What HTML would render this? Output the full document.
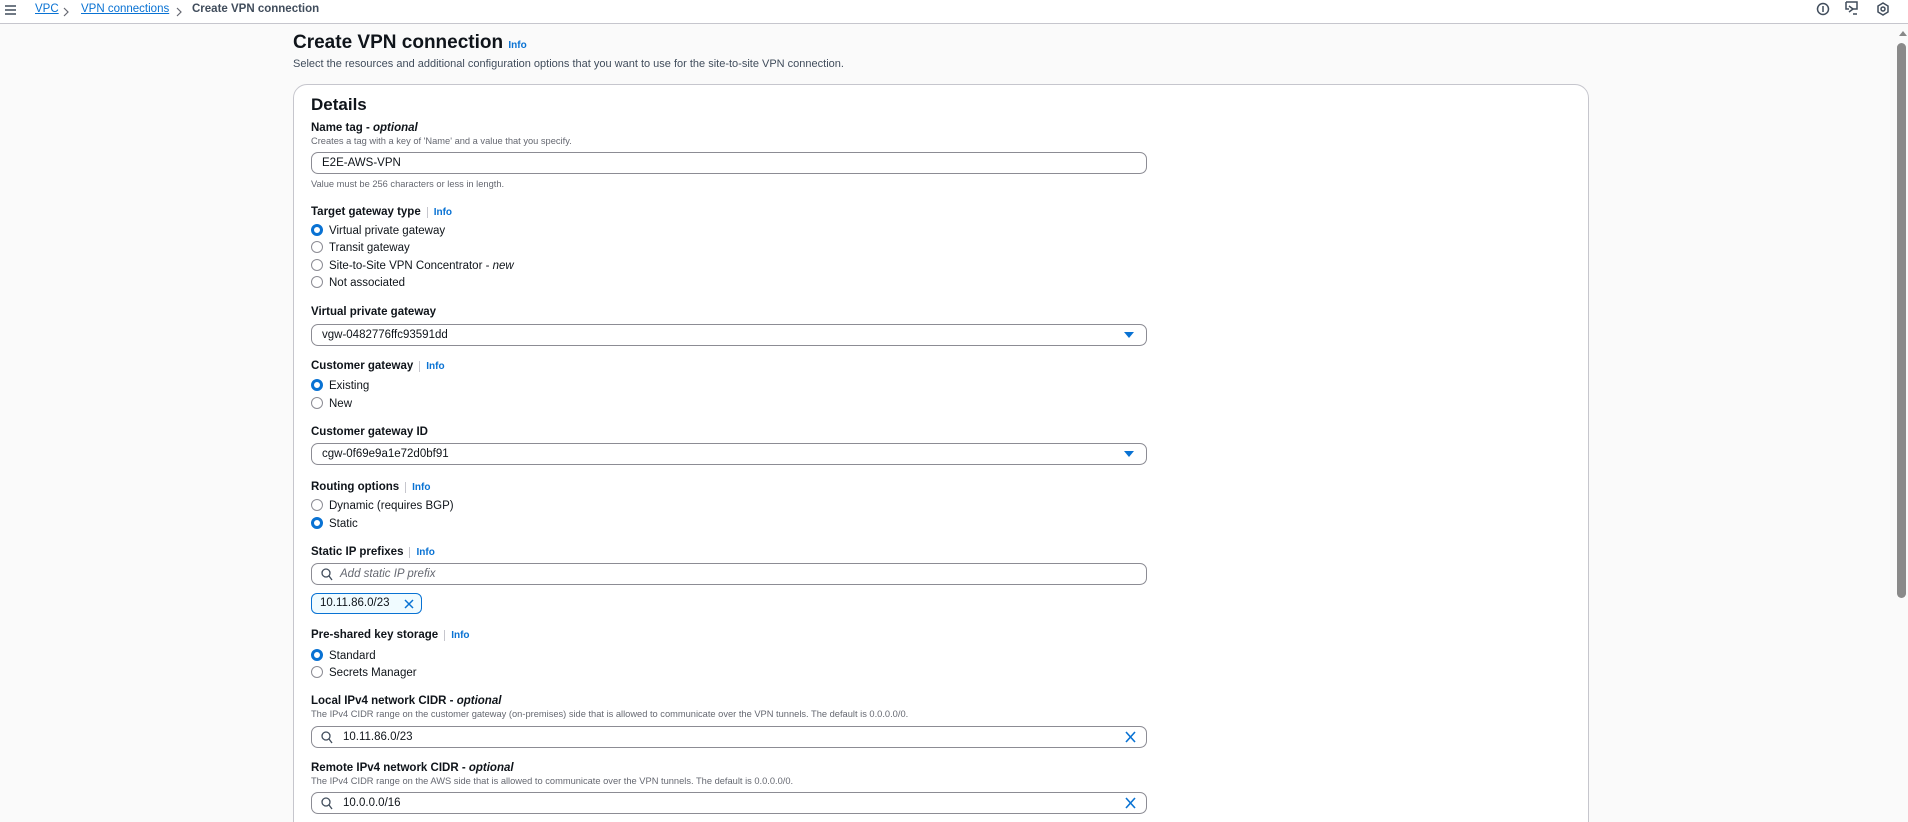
<!DOCTYPE html>
<html><head><meta charset="utf-8"><style>
*{box-sizing:border-box;margin:0;padding:0}
html,body{width:1908px;height:822px;overflow:hidden}
body{background:#fafafa;font-family:"Liberation Sans",sans-serif;color:#0f141a;position:relative}
.hdr{position:absolute;left:0;top:0;width:1908px;height:24px;background:#fff;border-bottom:1px solid #c6c6cd;font-size:11.5px}
.abs{position:absolute}
a{color:#0972d3;text-decoration:underline}
.card{position:absolute;left:293px;top:84px;width:1296px;height:760px;background:#fff;border:1px solid #c6c6cd;border-radius:14px}
.lbl{position:absolute;left:17px;font-size:11.5px;font-weight:bold;white-space:nowrap}
.lbl .info{color:#0972d3;font-size:10px;margin-left:6px;padding-left:6px;border-left:1px solid #c6c6cd;font-weight:bold}
.desc{position:absolute;left:17px;font-size:9.3px;color:#656871;white-space:nowrap}
.inp{position:absolute;left:17px;width:836px;height:22px;border:1px solid #8c8c94;border-radius:7px;font-size:11.5px;padding-left:10px;line-height:20px;background:#fff}
.r{position:absolute;left:17px;font-size:11.5px;white-space:nowrap;line-height:14px}
.r i{display:inline-block;width:12px;height:12px;border-radius:50%;border:1px solid #8c8c94;vertical-align:-2px;margin-right:6px}
.r i.on{border:3.5px solid #0972d3}
.caret{position:absolute;right:12px;top:7px;width:0;height:0;border-left:5px solid transparent;border-right:5px solid transparent;border-top:6px solid #0972d3}
.srch{position:absolute;left:9px;top:4px}
.x{position:absolute;right:10px;top:4px}
</style></head><body>
<div class="hdr">
<svg class="abs" style="left:5px;top:4px" width="12" height="12" viewBox="0 0 12 12"><path d="M0 2h11M0 6h11M0 10h11" stroke="#414d5c" stroke-width="1.5"/></svg>
<a class="abs" style="left:35px;top:3px">VPC</a>
<svg class="abs" style="left:63px;top:7px" width="6" height="10" viewBox="0 0 6 10"><path d="M1 1l4 4-4 4" fill="none" stroke="#656871" stroke-width="1.2"/></svg>
<a class="abs" style="left:81px;top:3px">VPN connections</a>
<svg class="abs" style="left:176px;top:7px" width="6" height="10" viewBox="0 0 6 10"><path d="M1 1l4 4-4 4" fill="none" stroke="#656871" stroke-width="1.2"/></svg>
<span class="abs" style="left:192px;top:3px;color:#414d5c;font-weight:bold">Create VPN connection</span>
<svg class="abs" style="left:1816px;top:2px" width="14" height="14" viewBox="0 0 14 14"><circle cx="7" cy="7" r="5.5" fill="none" stroke="#414d5c" stroke-width="1.5"/><path d="M7 4v6" stroke="#414d5c" stroke-width="1.5"/></svg>
<svg class="abs" style="left:1845px;top:1px" width="15" height="15" viewBox="0 0 15 15"><path d="M1 1h11v7H8M1 1v7h3" fill="none" stroke="#414d5c" stroke-width="1.5"/><path d="M4 5l4 3-4 3M8 13h4" fill="none" stroke="#414d5c" stroke-width="1.5"/></svg>
<svg class="abs" style="left:1876px;top:2px" width="14" height="14" viewBox="0 0 14 14"><path d="M7 1l5 3v6l-5 3-5-3V4z" fill="none" stroke="#414d5c" stroke-width="1.5"/><circle cx="7" cy="7" r="2" fill="none" stroke="#414d5c" stroke-width="1.5"/></svg>
</div>
<div class="abs" style="left:1899px;top:31px;width:0;height:0;border-left:4px solid transparent;border-right:4px solid transparent;border-bottom:5px solid #888"></div>
<div class="abs" style="left:1897px;top:43px;width:9px;height:555px;background:#8a8a8a;border-radius:5px"></div>
<div class="abs" style="left:293px;top:32px;font-size:19px;font-weight:bold">Create VPN connection <span style="font-size:10px;color:#0972d3">Info</span></div>
<div class="abs" style="left:293px;top:58px;font-size:11px;color:#414d5c">Select the resources and additional configuration options that you want to use for the site-to-site VPN connection.</div>
<div class="card">
<div class="abs" style="left:17px;top:10px;font-size:17px;font-weight:bold">Details</div>
<div class="lbl" style="top:37px">Name tag - <i>optional</i></div>
<div class="desc" style="top:51px">Creates a tag with a key of 'Name' and a value that you specify.</div>
<div class="inp" style="top:67px">E2E-AWS-VPN</div>
<div class="desc" style="top:94px">Value must be 256 characters or less in length.</div>
<div class="lbl" style="top:121px">Target gateway type<span class="info">Info</span></div>
<div class="r" style="top:139px"><i class="on"></i>Virtual private gateway</div>
<div class="r" style="top:156px"><i></i>Transit gateway</div>
<div class="r" style="top:174px"><i></i>Site-to-Site VPN Concentrator - <em>new</em></div>
<div class="r" style="top:191px"><i></i>Not associated</div>
<div class="lbl" style="top:221px">Virtual private gateway</div>
<div class="inp" style="top:239px">vgw-0482776ffc93591dd<div class="caret"></div></div>
<div class="lbl" style="top:275px">Customer gateway<span class="info">Info</span></div>
<div class="r" style="top:294px"><i class="on"></i>Existing</div>
<div class="r" style="top:312px"><i></i>New</div>
<div class="lbl" style="top:341px">Customer gateway ID</div>
<div class="inp" style="top:358px">cgw-0f69e9a1e72d0bf91<div class="caret"></div></div>
<div class="lbl" style="top:396px">Routing options<span class="info">Info</span></div>
<div class="r" style="top:414px"><i></i>Dynamic (requires BGP)</div>
<div class="r" style="top:432px"><i class="on"></i>Static</div>
<div class="lbl" style="top:461px">Static IP prefixes<span class="info">Info</span></div>
<div class="inp" style="top:478px;padding-left:28px;color:#656871;font-style:italic"><svg class="srch" width="12" height="13" viewBox="0 0 12 13"><circle cx="5" cy="5" r="4" fill="none" stroke="#414d5c" stroke-width="1.3"/><path d="M8 8l3 4" stroke="#414d5c" stroke-width="1.3"/></svg>Add static IP prefix</div>
<div class="abs" style="left:17px;top:508px;width:111px;height:21px;border:1px solid #0972d3;background:#f0fbff;border-radius:6px;font-size:11.5px;padding-left:8px;line-height:19px">10.11.86.0/23<svg style="position:absolute;right:7px;top:5px" width="10" height="10" viewBox="0 0 10 10"><path d="M1 1l8 8M9 1l-8 8" stroke="#0972d3" stroke-width="1.5"/></svg></div>
<div class="lbl" style="top:544px">Pre-shared key storage<span class="info">Info</span></div>
<div class="r" style="top:564px"><i class="on"></i>Standard</div>
<div class="r" style="top:581px"><i></i>Secrets Manager</div>
<div class="lbl" style="top:610px">Local IPv4 network CIDR - <i>optional</i></div>
<div class="desc" style="top:624px">The IPv4 CIDR range on the customer gateway (on-premises) side that is allowed to communicate over the VPN tunnels. The default is 0.0.0.0/0.</div>
<div class="inp" style="top:641px;padding-left:31px"><svg class="srch" width="12" height="13" viewBox="0 0 12 13"><circle cx="5" cy="5" r="4" fill="none" stroke="#414d5c" stroke-width="1.3"/><path d="M8 8l3 4" stroke="#414d5c" stroke-width="1.3"/></svg>10.11.86.0/23<svg class="x" width="11" height="12" viewBox="0 0 11 12"><path d="M1 1l9 10M10 1l-9 10" stroke="#0972d3" stroke-width="1.6"/></svg></div>
<div class="lbl" style="top:677px">Remote IPv4 network CIDR - <i>optional</i></div>
<div class="desc" style="top:691px">The IPv4 CIDR range on the AWS side that is allowed to communicate over the VPN tunnels. The default is 0.0.0.0/0.</div>
<div class="inp" style="top:707px;padding-left:31px"><svg class="srch" width="12" height="13" viewBox="0 0 12 13"><circle cx="5" cy="5" r="4" fill="none" stroke="#414d5c" stroke-width="1.3"/><path d="M8 8l3 4" stroke="#414d5c" stroke-width="1.3"/></svg>10.0.0.0/16<svg class="x" width="11" height="12" viewBox="0 0 11 12"><path d="M1 1l9 10M10 1l-9 10" stroke="#0972d3" stroke-width="1.6"/></svg></div>
</div>
</body></html>
